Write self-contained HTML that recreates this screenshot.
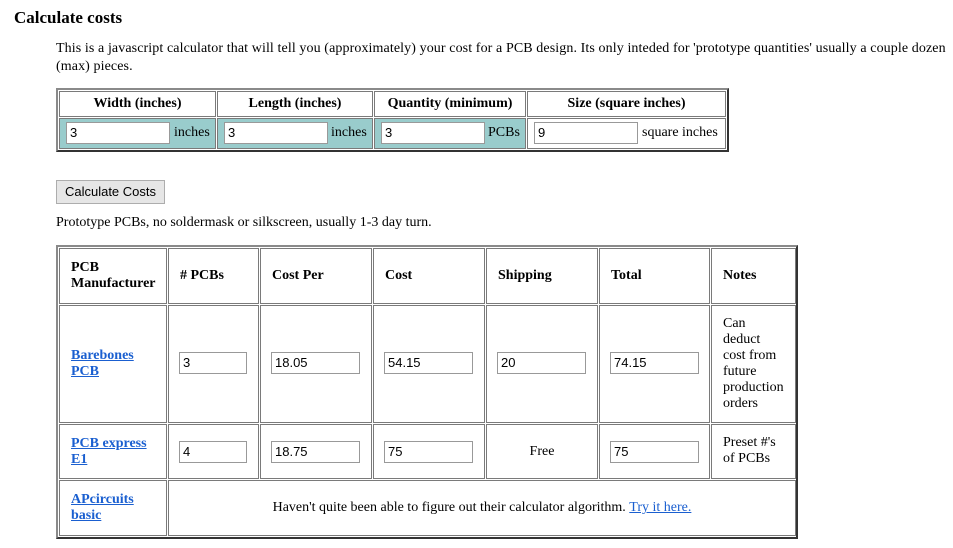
<!DOCTYPE html>
<html><head><meta charset="utf-8"><style>
body{margin:0;background:#fff;width:953px;height:548px;position:relative;overflow:hidden;font-family:"Liberation Serif",serif;font-size:14px;color:#000}
.a{position:absolute}
.c{position:absolute;box-sizing:border-box;border:1px solid #7a7a7a;}
.t{position:absolute;box-sizing:border-box;border:2px solid;border-color:#8a8a8a #333 #333 #8a8a8a}
.h{font-weight:bold;display:flex;align-items:center;justify-content:center;font-size:14px}
.inp{position:absolute;box-sizing:border-box;height:22px;border:1px solid #999;background:#fff;font-family:"Liberation Sans",sans-serif;font-size:13px;padding:2px 3px;line-height:16px}
.teal{background:#99cccc}
a{color:#1a5fd0;text-decoration:underline}
.b{font-weight:bold}
.mid{display:flex;align-items:center}
</style></head><body>
<div class="a b" style="left:14px;top:8px;font-size:17px">Calculate costs</div>
<div class="a" style="left:56px;top:40px;width:892px;line-height:18px;letter-spacing:0.1px">This is a javascript calculator that will tell you (approximately) your cost for a PCB design. Its only inteded for 'prototype quantities' usually a couple dozen (max) pieces.</div>

<div class="t" style="left:56px;top:88px;width:673px;height:64px"></div>
<div class="c h" style="left:59px;top:91px;width:157px;height:26px">Width (inches)</div>
<div class="c h" style="left:217px;top:91px;width:156px;height:26px">Length (inches)</div>
<div class="c h" style="left:374px;top:91px;width:152px;height:26px">Quantity (minimum)</div>
<div class="c h" style="left:527px;top:91px;width:199px;height:26px">Size (square inches)</div>
<div class="c teal" style="left:59px;top:118px;width:157px;height:31px"></div>
<div class="c teal" style="left:217px;top:118px;width:156px;height:31px"></div>
<div class="c teal" style="left:374px;top:118px;width:152px;height:31px"></div>
<div class="c" style="left:527px;top:118px;width:199px;height:31px"></div>
<div class="inp" style="left:66px;top:122px;width:104px">3</div><div class="a" style="left:174px;top:125px">inches</div>
<div class="inp" style="left:224px;top:122px;width:104px">3</div><div class="a" style="left:331px;top:125px">inches</div>
<div class="inp" style="left:381px;top:122px;width:104px">3</div><div class="a" style="left:488px;top:125px">PCBs</div>
<div class="inp" style="left:534px;top:122px;width:104px">9</div><div class="a" style="left:642px;top:125px">square inches</div>

<div class="a" style="left:56px;top:180px;width:109px;height:24px;box-sizing:border-box;border:1px solid #adadad;background:#e6e6e6;font-family:'Liberation Sans',sans-serif;font-size:13px;text-align:center;line-height:22px">Calculate Costs</div>
<div class="a" style="left:56px;top:215px">Prototype PCBs, no soldermask or silkscreen, usually 1-3 day turn.</div>

<div class="t" style="left:56px;top:245px;width:742px;height:294px;border-width:2px"></div>
<div class="c b mid" style="left:59px;top:248px;width:108px;height:56px;padding-left:11px;line-height:16px">PCB<br>Manufacturer</div>
<div class="c b" style="left:168px;top:248px;width:91px;height:56px;padding:19px 0 0 11px">#&nbsp;PCBs</div>
<div class="c b" style="left:260px;top:248px;width:112px;height:56px;padding:19px 0 0 11px">Cost Per</div>
<div class="c b" style="left:373px;top:248px;width:112px;height:56px;padding:19px 0 0 11px">Cost</div>
<div class="c b" style="left:486px;top:248px;width:112px;height:56px;padding:19px 0 0 11px">Shipping</div>
<div class="c b" style="left:599px;top:248px;width:111px;height:56px;padding:19px 0 0 11px">Total</div>
<div class="c b" style="left:711px;top:248px;width:85px;height:56px;padding:19px 0 0 11px">Notes</div>
<div class="c b mid" style="left:59px;top:305px;width:108px;height:118px;padding-left:11px;line-height:16px"><a href="#">Barebones<br>PCB</a></div>
<div class="c" style="left:168px;top:305px;width:91px;height:118px"></div>
<div class="c" style="left:260px;top:305px;width:112px;height:118px"></div>
<div class="c" style="left:373px;top:305px;width:112px;height:118px"></div>
<div class="c" style="left:486px;top:305px;width:112px;height:118px"></div>
<div class="c" style="left:599px;top:305px;width:111px;height:118px"></div>
<div class="c" style="left:711px;top:305px;width:85px;height:118px;padding:10px 0 0 11px;line-height:16px">Can<br>deduct<br>cost from<br>future<br>production<br>orders</div>
<div class="inp" style="left:179px;top:352px;width:68px">3</div>
<div class="inp" style="left:271px;top:352px;width:89px">18.05</div>
<div class="inp" style="left:384px;top:352px;width:89px">54.15</div>
<div class="inp" style="left:497px;top:352px;width:89px">20</div>
<div class="inp" style="left:610px;top:352px;width:89px">74.15</div>
<div class="c b mid" style="left:59px;top:424px;width:108px;height:55px;padding-left:11px;line-height:16px"><a href="#">PCB express<br>E1</a></div>
<div class="c" style="left:168px;top:424px;width:91px;height:55px"></div>
<div class="c" style="left:260px;top:424px;width:112px;height:55px"></div>
<div class="c" style="left:373px;top:424px;width:112px;height:55px"></div>
<div class="c mid" style="left:486px;top:424px;width:112px;height:55px;justify-content:center">Free</div>
<div class="c" style="left:599px;top:424px;width:111px;height:55px"></div>
<div class="c" style="left:711px;top:424px;width:85px;height:55px;padding:10px 0 0 11px;line-height:16px">Preset #'s<br>of PCBs</div>
<div class="inp" style="left:179px;top:441px;width:68px">4</div>
<div class="inp" style="left:271px;top:441px;width:89px">18.75</div>
<div class="inp" style="left:384px;top:441px;width:89px">75</div>
<div class="inp" style="left:610px;top:441px;width:89px">75</div>
<div class="c b mid" style="left:59px;top:480px;width:108px;height:56px;padding-left:11px;line-height:16px"><a href="#">APcircuits<br>basic</a></div>
<div class="c mid" style="left:168px;top:480px;width:628px;height:56px;justify-content:center">Haven't quite been able to figure out their calculator algorithm.&nbsp;<a href="#">Try it here.</a></div>
</body></html>
